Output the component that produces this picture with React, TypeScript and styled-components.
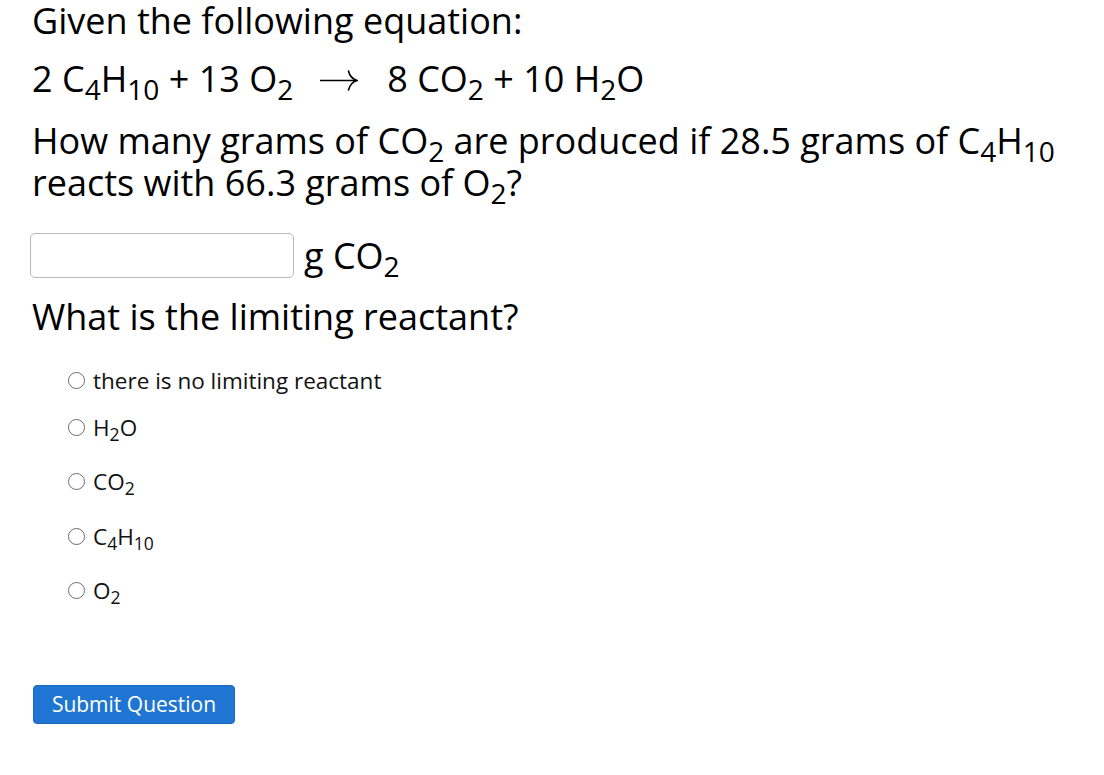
import React from 'react';
import styled, { createGlobalStyle } from 'styled-components';

const GlobalStyle = createGlobalStyle`
  html, body {
    margin: 0;
    padding: 0;
    background: #ffffff;
  }
  body {
    font-family: "Open Sans", "Noto Sans", sans-serif;
    color: #000000;
  }
`;

const Page = styled.div`
  padding: 0 0 40px 32px;
  width: 1050px;
`;

const Para = styled.p<{ $gap?: number }>`
  margin: 0 0 ${(p) => p.$gap ?? 14}px 0;
  font-size: 36px;
  line-height: 42px;
`;

const Sub = styled.sub`
  font-size: 0.78em;
  line-height: 0;
  vertical-align: -0.28em;
`;

const ArrowIcon = styled.svg`
  display: inline-block;
  width: 39px;
  height: 24px;
  margin: 0 29px 0 26px;
  vertical-align: 0px;
`;

const Arrow = () => (
  <ArrowIcon viewBox="0 0 39 24" aria-label="yields">
    <path d="M1 12.5 H37.5" stroke="#000" strokeWidth="1.6" fill="none" />
    <path
      d="M29.5 3 C30.5 7.5 33.5 11 38 12.5 C33.5 14 30.5 17.5 29.5 22"
      stroke="#000"
      strokeWidth="1.6"
      fill="none"
      strokeLinecap="round"
    />
  </ArrowIcon>
);

const AnswerRow = styled.div`
  display: flex;
  align-items: center;
  gap: 10px;
  margin: 27px 0 16px -2px;
  font-size: 36px;
`;

const AnswerInput = styled.input`
  box-sizing: border-box;
  width: 264px;
  height: 45px;
  border: 1px solid #b8b8b8;
  border-radius: 5px;
  font-size: 20px;
  font-family: inherit;
  padding: 0 8px;
`;

const Options = styled.div`
  display: flex;
  flex-direction: column;
  margin: 27px 0 0 36px;
`;

const Option = styled.label`
  display: flex;
  align-items: center;
  height: 30px;
  margin-bottom: 24.5px;
  font-size: 22.5px;
  color: #111111;
  cursor: pointer;

  &:first-child {
    margin-bottom: 17px;
  }
  &:last-child {
    margin-bottom: 0;
  }
`;

const Radio = styled.span`
  box-sizing: border-box;
  width: 17px;
  height: 17px;
  border: 1.5px solid #6b6b6b;
  border-radius: 50%;
  margin-right: 8px;
  flex-shrink: 0;
`;

const SubmitButton = styled.button`
  margin: 79px 0 0 1px;
  width: 202px;
  height: 39px;
  background: #1f76d2;
  color: #ffffff;
  border: 1px solid #1a68bb;
  border-radius: 4px;
  font-family: "Open Sans", "Noto Sans", sans-serif;
  font-size: 21px;
  cursor: pointer;
`;

const options: React.ReactNode[] = [
  'there is no limiting reactant',
  <>H<Sub>2</Sub>O</>,
  <>CO<Sub>2</Sub></>,
  <>C<Sub>4</Sub>H<Sub>10</Sub></>,
  <>O<Sub>2</Sub></>,
];

export default function App() {
  return (
    <>
      <GlobalStyle />
      <Page>
        <Para $gap={16}>Given the following equation:</Para>
        <Para $gap={20}>
          2 C<Sub>4</Sub>H<Sub>10</Sub> + 13 O<Sub>2</Sub>
          <Arrow />
          8 CO<Sub>2</Sub> + 10 H<Sub>2</Sub>O
        </Para>
        <Para $gap={0}>
          How many grams of CO<Sub>2</Sub> are produced if 28.5 grams of C<Sub>4</Sub>H<Sub>10</Sub> reacts with 66.3 grams of O<Sub>2</Sub>?
        </Para>
        <AnswerRow>
          <AnswerInput type="text" aria-label="grams of CO2" />
          <span>g CO<Sub>2</Sub></span>
        </AnswerRow>
        <Para $gap={0}>What is the limiting reactant?</Para>
        <Options>
          {options.map((o, i) => (
            <Option key={i}>
              <Radio />
              <span>{o}</span>
            </Option>
          ))}
        </Options>
        <SubmitButton>Submit Question</SubmitButton>
      </Page>
    </>
  );
}
